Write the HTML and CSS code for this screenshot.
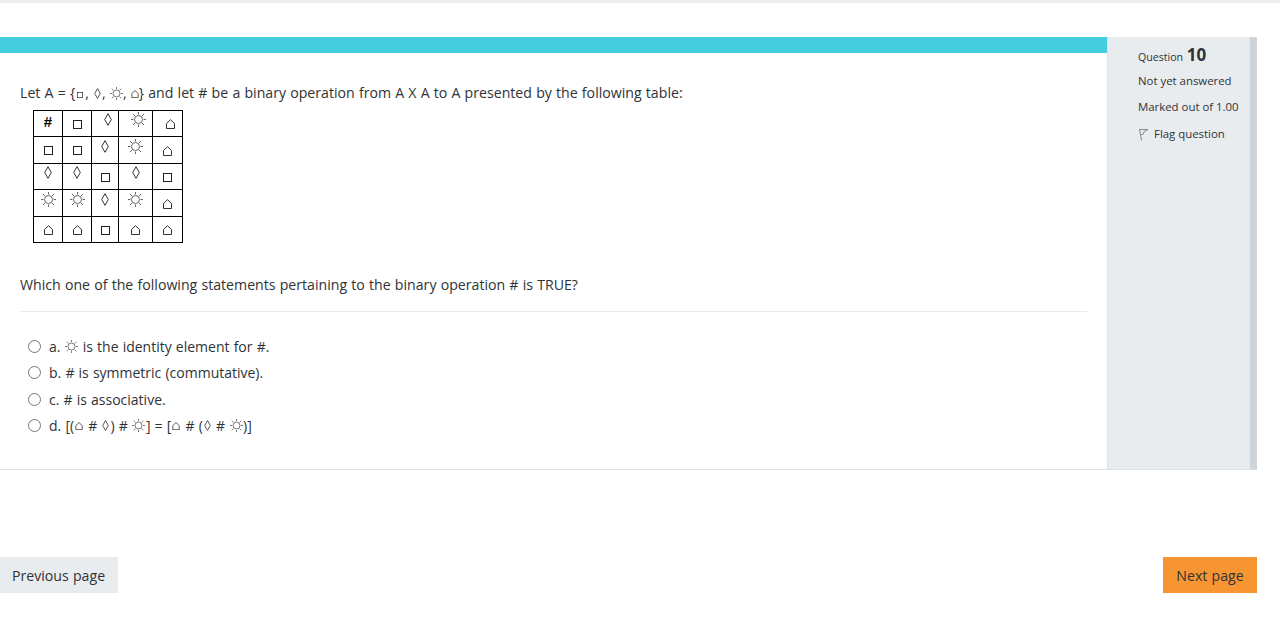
FILE: index.html
```html
<!DOCTYPE html>
<html>
<head>
	<meta charset="utf-8">
	<title>Question 10</title>
	<link rel="stylesheet" href="styles.css">
</head>
<body>
	<svg class="defs" width="0" height="0">
		<symbol id="square" viewBox="0 0 9 9"><rect x="0.5" y="0.5" width="8" height="8" fill="none" stroke="#222"/></symbol>
		<symbol id="diamond" viewBox="0 0 8 13"><path d="M4 .7 7.3 6.5 4 12.3 .7 6.5Z" fill="none" stroke="#333"/></symbol>
		<symbol id="house" viewBox="0 0 9 10"><path d="M.5 9.5V4.5L4.5 .7 8.5 4.5V9.5Z" fill="none" stroke="#333"/></symbol>
		<symbol id="sun" viewBox="0 0 15 15"><g fill="none" stroke="#666"><circle cx="7.5" cy="7.5" r="4"/><path d="M7.5 0V2.5M7.5 12.5V15M0 7.5H2.5M12.5 7.5H15M2 2 4 4M11 11 13 13M2 13 4 11M11 4 13 2"/></g></symbol>
	</svg>
	<div class="topline"></div>
	<div class="page">
		<div class="question">
			<div class="content">
				<div class="tealbar"></div>
				<div class="formulation">
					<p class="intro">Let A = {<svg class="tiny tiny-sq"><use href="#square"/></svg>, <svg class="tiny tiny-di"><use href="#diamond"/></svg>, <svg class="tiny tiny-su"><use href="#sun"/></svg>, <svg class="tiny tiny-ho"><use href="#house"/></svg>} and let # be a binary operation from A X A to A presented by the following table:</p>
					<table class="optable">
						<tr class="head">
							<th>#</th>
							<td><svg class="sq"><use href="#square"/></svg></td>
							<td><svg class="di"><use href="#diamond"/></svg></td>
							<td><svg class="su"><use href="#sun"/></svg></td>
							<td><svg class="ho"><use href="#house"/></svg></td>
						</tr>
						<tr>
							<td><svg class="sq"><use href="#square"/></svg></td>
							<td><svg class="sq"><use href="#square"/></svg></td>
							<td><svg class="di"><use href="#diamond"/></svg></td>
							<td><svg class="su"><use href="#sun"/></svg></td>
							<td><svg class="ho"><use href="#house"/></svg></td>
						</tr>
						<tr>
							<td><svg class="di"><use href="#diamond"/></svg></td>
							<td><svg class="di"><use href="#diamond"/></svg></td>
							<td><svg class="sq"><use href="#square"/></svg></td>
							<td><svg class="di"><use href="#diamond"/></svg></td>
							<td><svg class="sq"><use href="#square"/></svg></td>
						</tr>
						<tr>
							<td><svg class="su"><use href="#sun"/></svg></td>
							<td><svg class="su"><use href="#sun"/></svg></td>
							<td><svg class="di"><use href="#diamond"/></svg></td>
							<td><svg class="su"><use href="#sun"/></svg></td>
							<td><svg class="ho"><use href="#house"/></svg></td>
						</tr>
						<tr>
							<td><svg class="ho"><use href="#house"/></svg></td>
							<td><svg class="ho"><use href="#house"/></svg></td>
							<td><svg class="sq"><use href="#square"/></svg></td>
							<td><svg class="ho"><use href="#house"/></svg></td>
							<td><svg class="ho"><use href="#house"/></svg></td>
						</tr>
					</table>
					<p class="prompt">Which one of the following statements pertaining to the binary operation # is TRUE?</p>
				</div>
				<div class="answers">
					<label class="answer"><input type="radio" name="q10">a. <svg class="tiny tiny-su"><use href="#sun"/></svg> is the identity element for #.</label>
					<label class="answer"><input type="radio" name="q10">b. # is symmetric (commutative).</label>
					<label class="answer"><input type="radio" name="q10">c. # is associative.</label>
					<label class="answer"><input type="radio" name="q10">d. [(<svg class="tiny tiny-ho"><use href="#house"/></svg> # <svg class="tiny tiny-di"><use href="#diamond"/></svg>) # <svg class="tiny tiny-su"><use href="#sun"/></svg>] = [<svg class="tiny tiny-ho"><use href="#house"/></svg> # (<svg class="tiny tiny-di"><use href="#diamond"/></svg> # <svg class="tiny tiny-su"><use href="#sun"/></svg>)]</label>
				</div>
			</div>
			<div class="info">
				<h3 class="qno">Question <span>10</span></h3>
				<div class="state">Not yet answered</div>
				<div class="grade">Marked out of 1.00</div>
				<div class="flag">
					<svg width="11" height="13" viewBox="0 0 11 13"><path d="M1.5 1 3.5 12.5M1.5 1.5H10L6 3.5 5.5 6 2.3 6.8" fill="none" stroke="#888"/></svg>
					Flag question
				</div>
			</div>
		</div>
		<div class="pagebtns">
			<a class="btn btn-prev">Previous page</a>
			<a class="btn btn-next">Next page</a>
		</div>
	</div>
</body>
</html>
```

FILE: styles.css
```css
*{margin: 0; padding: 0; box-sizing: border-box;}
html, body{
	height: 617px;
	overflow: hidden;
}
body{
	font-family: "Open Sans", "Noto Sans", sans-serif;
	font-size: 14.15px;
	word-spacing: .5px;
	color: #2f3336;
	background: #fff;
}
.defs{
	position: absolute;
}
.topline{
	height: 3px;
	background: #eceeef;
}
.page{
	width: 1257px;
}
.question{
	display: flex;
	margin-top: 34px;
	height: 433px;
}
.content{
	width: 1107px;
	border-bottom: 1px solid #dee2e6;
}
.tealbar{
	height: 16px;
	background: #43cddd;
}
.formulation{
	margin: 0 20px;
	padding-top: 29px;
	height: 259px;
	border-bottom: 1px solid #e9ecef;
}
.intro{
	line-height: 22px;
	height: 28px;
}
.optable{
	border-collapse: collapse;
	margin-left: 13px;
	table-layout: fixed;
	width: 149px;
}
.optable th, .optable td{
	border: 1px solid #000;
	height: 26px;
	text-align: center;
	vertical-align: middle;
}
.optable tr:nth-child(even) td{
	height: 27px;
}
.optable th{
	color: #000;
	font-family: "Liberation Sans", sans-serif;
	font-size: 15px;
	padding-bottom: 5px;
}
.optable th:nth-child(1), .optable td:nth-child(1){width: 29px;}
.optable td:nth-child(2){width: 29px;}
.optable td:nth-child(3){width: 27px;}
.optable td:nth-child(4){width: 34px;}
.optable td:nth-child(5){width: 30px;}
.optable svg{
	display: block;
	margin-left: auto;
	margin-right: auto;
}
.head td:nth-child(n+3) svg{
	position: relative;
	left: 3px;
}
.sq{width: 9px; height: 9px; margin-top: 1px;}
.di{width: 8px; height: 13px; margin-bottom: 8px;}
.su{width: 15px; height: 15px; margin-bottom: 8px;}
.ho{width: 9px; height: 10px; margin-top: 1px;}
.prompt{
	margin-top: 31px;
	line-height: 22px;
}
.tiny{
	display: inline-block;
	vertical-align: baseline;
}
.tiny-sq{width: 8px; height: 6px; margin: 0 1px;}
.tiny-di{width: 7px; height: 11px; vertical-align: -1px; margin: 0 1px;}
.tiny-su{width: 13px; height: 13px; vertical-align: -2px;}
.tiny-ho{width: 8px; height: 8px;}
.answers{
	padding: 21px 0 0 28px;
	font-size: 14px;
}
.answer{
	display: flex;
	align-items: center;
	height: 26.5px;
	white-space: pre-wrap;
}
.answer .tiny-ho{margin: 0 1px;}
.answer .tiny-su{margin: 0 .5px;}
.answer input{
	width: 13px;
	height: 13px;
	margin-right: 8px;
}
.info{
	width: 150px;
	background: #e9ecef;
	border-left: 1px solid #dee2e6;
	border-right: 7px solid #ced4da;
	border-bottom: 1px solid #dee2e6;
	padding: 8px 0 0 30px;
	font-size: 11.4px;
	word-spacing: 0;
}
.qno{
	font-size: 10.6px;
	font-weight: normal;
	line-height: 20px;
}
.qno span{
	font-size: 17px;
	font-weight: bold;
	margin-left: 1px;
}
.state{
	margin-top: 5px;
	line-height: 18px;
}
.grade{
	margin-top: 8px;
	line-height: 18px;
}
.flag{
	display: flex;
	align-items: center;
	gap: 5px;
	margin-top: 9px;
	line-height: 18px;
}
.pagebtns{
	display: flex;
	justify-content: space-between;
	margin-top: 87px;
}
.btn{
	height: 36px;
	line-height: 38px;
	padding: 0 12px;
}
.btn-prev{
	background: #e9ecef;
	padding-right: 13px;
}
.btn-next{
	background: #f79533;
	width: 94px;
	padding: 0;
	text-align: center;
}
```
